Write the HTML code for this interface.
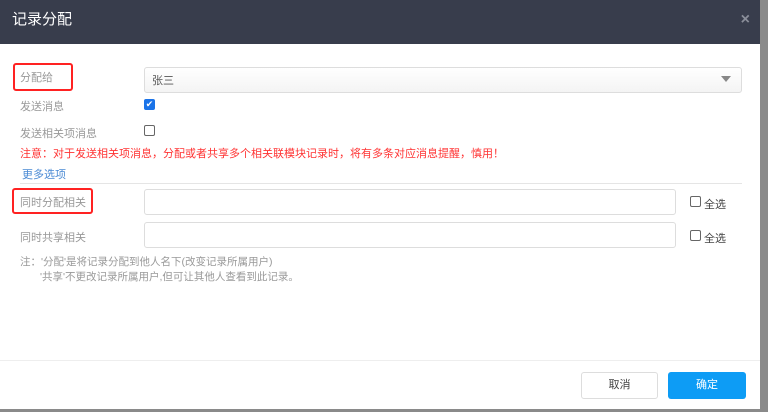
<!DOCTYPE html>
<html><head><meta charset="utf-8"><style>
*{margin:0;padding:0;box-sizing:border-box}
body{width:768px;height:412px;background:#8a8a8a;font-family:"Liberation Sans","Noto Sans CJK SC",sans-serif;font-size:11px;line-height:1;color:#999;position:relative;overflow:hidden}
.dlg{position:absolute;left:0;top:0;width:760px;height:409px;background:#fff}
.hd{height:44px;background:#383d4c;color:#fff;font-size:15px;line-height:1;padding:12px 0 0 12px}
.x{position:absolute;right:10px;top:12px;color:#8a8e99;font-size:16px;font-weight:bold}
.a{position:absolute;white-space:nowrap}
.lbl{left:20px;color:#999}
.box{border:1px solid #ddd;border-radius:3px;background:#fff}
.cb{width:11px;height:11px;border:1px solid #666;border-radius:2px}
.red{border:2px solid #f22;border-radius:3px}
</style></head><body>
<div class="dlg">
<div class="hd">记录分配</div><div class="x">×</div>
<div class="a red" style="left:13px;top:63px;width:60px;height:28px"></div>
<div class="a lbl" style="top:73px">分配给</div>
<div class="a box" style="left:144px;top:67px;width:598px;height:26px;background:linear-gradient(#fff,#f4f4f4)"></div>
<div class="a" style="left:152px;top:76px;color:#555">张三</div>
<div class="a" style="left:721px;top:76px;width:0;height:0;border-left:5px solid transparent;border-right:5px solid transparent;border-top:6px solid #888"></div>
<div class="a lbl" style="top:102px">发送消息</div>
<div class="a" style="left:144px;top:99px;width:11px;height:11px;background:#1a73e8;border-radius:2px;color:#fff;font-size:9px;line-height:11px;text-align:center">✔</div>
<div class="a lbl" style="top:129px">发送相关项消息</div>
<div class="a cb" style="left:144px;top:125px"></div>
<div class="a" style="left:20px;top:149px;color:#f33">注意：对于发送相关项消息，分配或者共享多个相关联模块记录时，将有多条对应消息提醒，慎用！</div>
<div class="a" style="left:22px;top:170px;color:#4a8ad4">更多选项</div>
<div class="a" style="left:20px;top:183px;width:722px;height:1px;background:#e5e5e5"></div>
<div class="a red" style="left:12px;top:188px;width:81px;height:26px"></div>
<div class="a lbl" style="top:198px">同时分配相关</div>
<div class="a box" style="left:144px;top:189px;width:532px;height:26px"></div>
<div class="a cb" style="left:690px;top:196px"></div>
<div class="a" style="left:704px;top:200px;color:#444">全选</div>
<div class="a lbl" style="top:233px">同时共享相关</div>
<div class="a box" style="left:144px;top:222px;width:532px;height:26px"></div>
<div class="a cb" style="left:690px;top:230px"></div>
<div class="a" style="left:704px;top:234px;color:#444">全选</div>
<div class="a lbl" style="top:257px;font-size:10.5px">注：'分配'是将记录分配到他人名下(改变记录所属用户)</div>
<div class="a lbl" style="left:40px;top:272px;font-size:10.5px">'共享'不更改记录所属用户,但可让其他人查看到此记录。</div>
<div class="a" style="left:0;top:360px;width:760px;height:1px;background:#eee"></div>
<div class="a box" style="left:581px;top:372px;width:77px;height:27px;text-align:center;line-height:25px;color:#444">取消</div>
<div class="a" style="left:668px;top:372px;width:78px;height:27px;background:#0d9cf5;border-radius:3px;text-align:center;line-height:27px;color:#fff">确定</div>
</div>
</body></html>
